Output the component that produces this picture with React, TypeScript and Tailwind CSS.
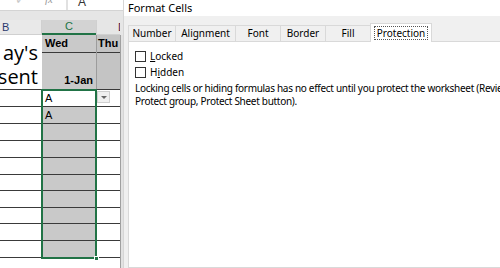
import React from "react";

const rowHeights = [17, 17, 17, 17, 17, 16, 17, 16, 17, 17, 12];

function Sheet() {
  return (
    <div className="relative w-[123px] h-[268px] shrink-0 overflow-hidden bg-white" style={{ fontFamily: '"Liberation Sans", Arial, sans-serif' }}>
      {/* formula bar */}
      <div className="h-[11px] flex items-end bg-white border-b border-[#d4d4d4] overflow-hidden">
        <div className="w-[66px] h-[11px] relative">
          <span className="absolute left-[15px] top-[-9px] text-[13px] text-[#c8c8c8]">✓</span>
          <span className="absolute left-[45px] top-[-8px] text-[11px] italic text-[#9a9a9a]" style={{ fontFamily: '"Liberation Serif", serif' }}>fx</span>
        </div>
        <div className="w-[2px] h-[11px] bg-[#e1e1e1]" />
        <div className="flex-1 h-[11px] relative">
          <span className="absolute left-[10px] top-[-6px] text-[12px] text-[#333]">A</span>
        </div>
      </div>
      <div className="h-[9px] bg-[#e6e6e6]" />
      {/* column headers */}
      <div className="flex h-[15px] text-[11px]">
        <div className="w-[42px] bg-[#e9e9e9] border-r border-[#cfcfcf] border-b border-[#d0d0d0] flex items-center pl-[2px] text-[#2b3a6e]">B</div>
        <div className="w-[54px] bg-[#d3d3d3] border-b-2 border-[#217346] flex items-center justify-center text-[#217346]">C</div>
        <div className="w-[24px] bg-[#e6e6e6] border-b border-[#d0d0d0] border-l border-[#cfcfcf] flex items-center justify-end text-[#502040] overflow-hidden">
          <span className="mr-[-6px]">D</span>
        </div>
        <div className="w-[3px] bg-[#e6e6e6]" />
      </div>
      {/* rows 1-2 */}
      <div className="flex h-[55px]">
        <div className="w-[42px] border-b border-[#3a3a3a] flex flex-col items-end justify-end text-[20px] leading-[24px] text-black pr-[4px]" style={{ fontFamily: '"Open Sans", sans-serif' }}>
          <span className="whitespace-nowrap">ay's</span>
          <span className="whitespace-nowrap">sent</span>
        </div>
        <div className="w-[54px] flex flex-col">
          <div className="h-[18px] bg-[#c9c9c9] border-b border-[#3a3a3a] text-[11px] font-bold pl-[3px] flex items-center">Wed</div>
          <div className="h-[37px] bg-[#c9c9c9] border-b border-[#3a3a3a] text-[11px] font-bold pr-[3px] flex items-end justify-end pb-[1px]">1-Jan</div>
        </div>
        <div className="w-[24px] flex flex-col border-l border-[#9c9c9c]">
          <div className="h-[18px] bg-[#c4c4c4] border-b border-[#3a3a3a] text-[11px] font-bold pl-[1px] flex items-center">Thu</div>
          <div className="h-[37px] bg-[#c4c4c4] border-b border-[#3a3a3a]" />
        </div>
        <div className="w-[3px] bg-[#e2e2e2] border-l border-[#a0a0a0]" />
      </div>
      {/* data rows */}
      {rowHeights.map((h, i) => (
        <div key={i} className="flex" style={{ height: h }}>
          <div className={`w-[42px] ${i < 10 ? "border-b border-[#3a3a3a]" : ""}`} />
          <div className={`w-[54px] text-[11px] pl-[3px] flex items-center ${i < 10 ? "border-b border-[#3a3a3a]" : ""} ${i === 0 || i === 10 ? "bg-white" : "bg-[#c9c9c9]"}`}>
            {i < 2 ? "A" : ""}
          </div>
          <div className={`w-[24px] relative ${i < 10 ? "border-b border-[#3a3a3a]" : ""}`}>
            {i === 0 && (
              <div className="absolute left-[1px] top-[1px] w-[13px] h-[12px] bg-[#f0f0f0] border border-[#cfcfcf] flex items-center justify-center">
                <div className="w-0 h-0 border-l-[3px] border-r-[3px] border-t-[3px] border-l-transparent border-r-transparent border-t-[#666]" />
              </div>
            )}
          </div>
          <div className="w-[3px] bg-[#e2e2e2] border-l border-[#a0a0a0]" />
        </div>
      ))}
      {/* selection */}
      <div className="absolute left-[41px] top-[89px] w-[56px] h-[170px] border-2 border-[#217346] pointer-events-none" />
      <div className="absolute left-[94px] top-[256px] w-[5px] h-[5px] bg-[#217346] border border-white" />
    </div>
  );
}

function Dialog() {
  const tabs = [
    { t: "Number", w: 47 },
    { t: "Alignment", w: 60 },
    { t: "Font", w: 45 },
    { t: "Border", w: 45 },
    { t: "Fill", w: 45 },
  ];
  return (
    <div className="flex-1 h-[268px] flex flex-col bg-[#f0f0f0] overflow-hidden border-l border-[#d6d6d6] text-[#000]" style={{ fontFamily: '"Noto Sans", sans-serif' }}>
      <div className="h-[16px] bg-white flex items-center pl-[4px] text-[11px] shrink-0">Format Cells</div>
      <div className="flex flex-col pl-[4px] pt-[7px] flex-1">
        <div className="flex items-end h-[18px] text-[10px] relative z-10">
          {tabs.map((tab) => (
            <div key={tab.t} className="h-[16px] border border-[#d9d9d9] border-b-0 -mr-px flex items-center justify-center bg-[#f0f0f0]" style={{ width: tab.w + 1 }}>
              {tab.t}
            </div>
          ))}
          <div className="w-[62px] h-[19px] border border-[#d9d9d9] border-b-0 bg-white flex items-center justify-center mb-[-1px]">
            <span className="border border-dotted border-[#555] px-[2px] leading-[12px]">Protection</span>
          </div>
        </div>
        <div className="flex-1 bg-white border border-[#d9d9d9] w-[600px] pl-[6px] pt-[8px] text-[10px]">
          <label className="flex items-center gap-[4px] h-[13px]">
            <span className="w-[11px] h-[11px] border border-[#333] bg-white" />
            <span><span className="underline">L</span>ocked</span>
          </label>
          <label className="flex items-center gap-[4px] h-[13px] mt-[3px]">
            <span className="w-[11px] h-[11px] border border-[#333] bg-white" />
            <span>H<span className="underline">i</span>dden</span>
          </label>
          <p className="mt-[3px] leading-[13px] whitespace-nowrap tracking-[-0.3px]">
            Locking cells or hiding formulas has no effect until you protect the worksheet (Review tab,
            <br />
            Protect group, Protect Sheet button).
          </p>
        </div>
      </div>
    </div>
  );
}

export default function App() {
  return (
    <div className="w-[500px] h-[268px] flex overflow-hidden bg-white">
      <Sheet />
      <Dialog />
    </div>
  );
}
